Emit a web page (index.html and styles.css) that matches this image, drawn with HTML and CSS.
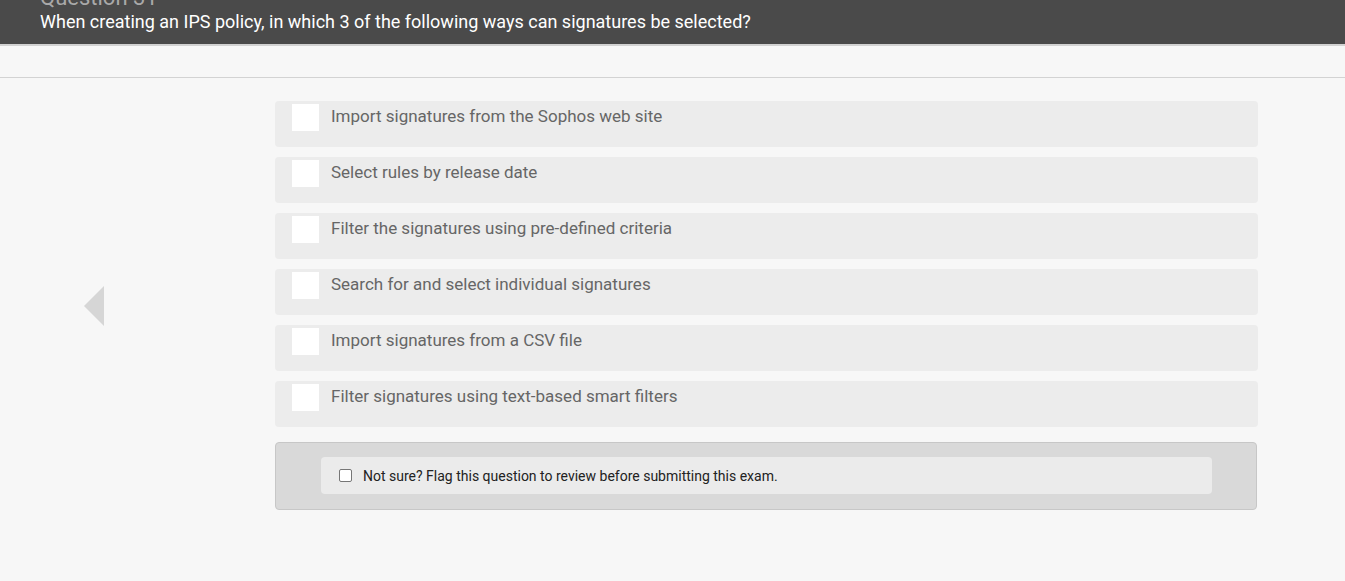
FILE: index.html
```html
<!DOCTYPE html>
<html>
<head>
<meta charset="utf-8">
<link rel="stylesheet" href="styles.css">
</head>
<body>
<header class="top">
  <div class="q-title">Question 31</div>
  <div class="q-text">When creating an IPS policy, in which 3 of the following ways can signatures be selected?</div>
</header>
<div class="subbar"></div>
<main class="main">
  <div class="nav-col"><span class="arrow-left"></span></div>
  <div class="content">
    <div class="options">
      <div class="option"><span class="box"></span><span class="label">Import signatures from the Sophos web site</span></div>
      <div class="option"><span class="box"></span><span class="label">Select rules by release date</span></div>
      <div class="option"><span class="box"></span><span class="label">Filter the signatures using pre-defined criteria</span></div>
      <div class="option"><span class="box"></span><span class="label">Search for and select individual signatures</span></div>
      <div class="option"><span class="box"></span><span class="label">Import signatures from a CSV file</span></div>
      <div class="option"><span class="box"></span><span class="label">Filter signatures using text-based smart filters</span></div>
    </div>
    <div class="flag">
      <label class="flag-inner"><input type="checkbox" class="flag-check"><span class="flag-text">Not sure? Flag this question to review before submitting this exam.</span></label>
    </div>
  </div>
</main>
</body>
</html>
```
FILE: styles.css
```css
html, body {
  margin: 0;
  padding: 0;
}
body {
  background: #f7f7f7;
  font-family: Roboto, "Liberation Sans", Arial, sans-serif;
  width: 1345px;
  height: 581px;
  overflow: hidden;
}
.top {
  background: #4a4a4a;
  box-sizing: border-box;
  padding: 0 0 12px 40px;
  display: flex;
  flex-direction: column;
  justify-content: flex-end;
  overflow: hidden;
  border-bottom: 2px solid #d2d2d2;
  height: 46px;
}
.q-title {
  color: #a9a9a9;
  font-size: 22px;
  line-height: 26px;
  white-space: nowrap;
}
.q-text {
  color: #ffffff;
  font-size: 18px;
  line-height: 21px;
  white-space: nowrap;
}
.subbar {
  height: 31px;
  border-bottom: 1px solid #d3d3d3;
  background: #f7f7f7;
}
.main {
  display: grid;
  grid-template-columns: 275px 983px;
  padding-top: 23px;
}
.nav-col {
  display: flex;
  align-items: center;
}
.arrow-left {
  display: block;
  width: 0;
  height: 0;
  margin-left: 84px;
  border-top: 20px solid transparent;
  border-bottom: 20px solid transparent;
  border-right: 20px solid #d6d6d6;
}
.options {
  display: flex;
  flex-direction: column;
  gap: 10px;
}
.option {
  height: 46px;
  background: #ececec;
  border-radius: 4px;
  display: flex;
  align-items: flex-start;
  padding-left: 17px;
  box-sizing: border-box;
}
.box {
  width: 27px;
  height: 27px;
  background: #ffffff;
  margin-top: 3px;
  flex: none;
}
.label {
  margin-left: 12px;
  margin-top: 5px;
  font-size: 17px;
  line-height: 20px;
  color: #666666;
}
.flag {
  margin-top: 15px;
  width: 982px;
  height: 68px;
  box-sizing: border-box;
  background: #d9d9d9;
  border: 1px solid #c7c7c7;
  border-radius: 4px;
  padding: 14px 44px 0 45px;
}
.flag-inner {
  display: flex;
  align-items: center;
  height: 37px;
  background: #ebebeb;
  border-radius: 4px;
  padding-left: 18px;
}
.flag-check {
  appearance: none;
  -webkit-appearance: none;
  margin: 0;
  width: 13px;
  height: 13px;
  box-sizing: border-box;
  border: 1px solid #767676;
  border-radius: 2px;
  background: #ffffff;
  flex: none;
}
.flag-text {
  margin-left: 11px;
  font-size: 14px;
  line-height: 16px;
  color: #222222;
}
```
